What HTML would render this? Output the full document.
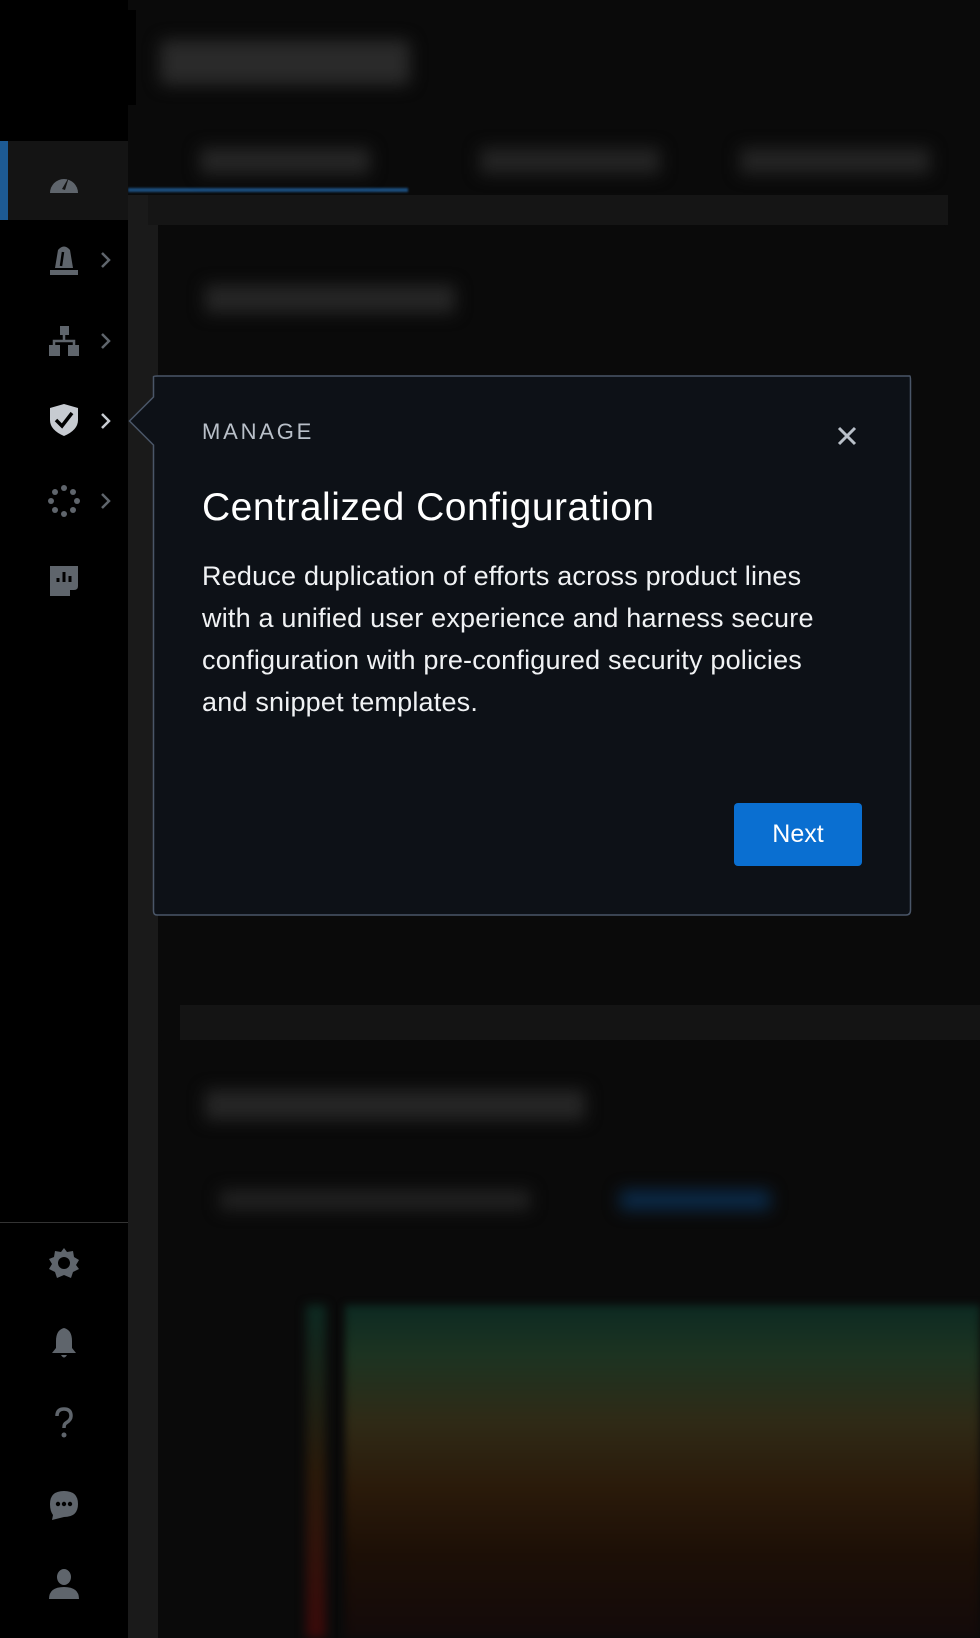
<!DOCTYPE html>
<html><head><meta charset="utf-8"><style>
*{margin:0;padding:0;box-sizing:border-box}
body{width:980px;height:1638px;background:#080808;position:relative;overflow:hidden;font-family:"Liberation Sans",sans-serif}
.abs{position:absolute}
.sb{left:0;top:0;width:128px;height:1638px;background:#000}
.blur{filter:blur(8px)}
.ic{position:absolute;left:48px;width:32px;height:32px}
.chev{position:absolute;left:99px;width:14px;height:18px}
</style></head><body>
<div class="abs" style="left:0;top:0;width:980px;height:2px;background:#7c8f7c"></div>
<div class="abs" style="left:128px;top:0;width:852px;height:1638px;background:#0a0a0a"></div>
<div class="abs" style="left:128px;top:195px;width:30px;height:1443px;background:#1a1a1a"></div>
<div class="abs" style="left:148px;top:195px;width:800px;height:30px;background:#151515" ></div>
<div class="abs" style="left:158px;top:225px;width:790px;height:780px;background:#0a0a0a;border-radius:6px"></div>
<div class="abs" style="left:180px;top:1005px;width:800px;height:35px;background:#141414"></div>
<div class="abs" style="left:158px;top:1040px;width:822px;height:598px;background:#0a0a0a;border-radius:6px"></div>
<div class="abs" style="left:128px;top:188px;width:280px;height:4px;background:#1c4f80;filter:blur(1px)"></div>
<div class="abs blur" style="left:160px;top:40px;width:250px;height:45px;background:#2a2a2a;border-radius:6px"></div>
<div class="abs blur" style="left:200px;top:148px;width:170px;height:26px;background:#262626"></div>
<div class="abs blur" style="left:480px;top:148px;width:180px;height:26px;background:#242424"></div>
<div class="abs blur" style="left:740px;top:148px;width:190px;height:26px;background:#242424"></div>
<div class="abs blur" style="left:205px;top:285px;width:250px;height:28px;background:#262626"></div>
<div class="abs blur" style="left:205px;top:1090px;width:380px;height:30px;background:#262626"></div>
<div class="abs blur" style="left:220px;top:1190px;width:310px;height:20px;background:#222"></div>
<div class="abs blur" style="left:620px;top:1190px;width:150px;height:20px;background:#0b2a48"></div>
<div class="abs" style="left:345px;top:1305px;width:635px;height:333px;background:linear-gradient(#0d2a22 0%,#1c3321 15%,#2f2a16 35%,#2a1a0a 55%,#1c0f06 75%,#130a0a 100%);filter:blur(4px)"></div>
<div class="abs" style="left:306px;top:1305px;width:20px;height:333px;background:linear-gradient(#0d2a22,#2a1a0a 50%,#3a0a0a);filter:blur(5px)"></div>
<div class="abs sb"></div>
<div class="abs" style="left:0;top:10px;width:136px;height:95px;background:#000"></div>
<div class="abs" style="left:0;top:141px;width:128px;height:79px;background:#141414"></div>
<div class="abs" style="left:0;top:141px;width:8px;height:79px;background:#1d5a93"></div>
<div class="abs" style="left:0;top:1222px;width:128px;height:1px;background:#333"></div>
<svg class="ic" style="top:165px" viewBox="0 0 32 32"><path d="M2 28A14 14 0 1 1 30 28Z" fill="#5f656c"/><path d="M17 25L21 12L14 24Z" fill="#141414"/></svg>
<svg class="ic" style="top:244px" viewBox="0 0 32 32"><path d="M7 24L10 6Q16 -1 22 6L25 24Z" fill="#5f656c"/><path d="M13 22L15 8" stroke="#000" stroke-width="2.5"/><rect x="2" y="26" width="28" height="5" fill="#5f656c"/></svg>
<svg class="ic" style="top:325px" viewBox="0 0 32 32"><rect x="12" y="1" width="9" height="9" fill="#5f656c"/><path d="M16 10V16M6 22V16H26V22" stroke="#5f656c" stroke-width="2.5" fill="none"/><rect x="1" y="20" width="11" height="11" fill="#5f656c"/><rect x="20" y="20" width="11" height="11" fill="#5f656c"/></svg>
<svg class="ic" style="top:404px" viewBox="0 0 32 32"><path d="M2 4L16 0L30 4V16Q30 26 16 32Q2 26 2 16Z" fill="#c7cbd1"/><path d="M8 16L14 22L24 9" stroke="#000" stroke-width="3.5" fill="none"/></svg>
<svg class="ic" style="top:485px" viewBox="0 0 32 32" fill="#5f656c"><circle cx="16" cy="3" r="3"/><circle cx="16" cy="29" r="3"/><circle cx="3" cy="16" r="3"/><circle cx="29" cy="16" r="3"/><circle cx="7" cy="7" r="3"/><circle cx="25" cy="7" r="3"/><circle cx="7" cy="25" r="3"/><circle cx="25" cy="25" r="3"/></svg>
<svg class="ic" style="top:564px" viewBox="0 0 32 32"><path d="M2 2H30V22Q30 26 26 26H22V32H2Z" fill="#5f656c"/><path d="M10 18V14M16 18V8M22 18V12" stroke="#000" stroke-width="3"/></svg>
<svg class="chev" style="top:251px" viewBox="0 0 14 18"><path d="M3 2L10 9L3 16" stroke="#5f656c" stroke-width="2.5" fill="none"/></svg>
<svg class="chev" style="top:332px" viewBox="0 0 14 18"><path d="M3 2L10 9L3 16" stroke="#5f656c" stroke-width="2.5" fill="none"/></svg>
<svg class="chev" style="top:412px" viewBox="0 0 14 18"><path d="M3 2L10 9L3 16" stroke="#c7cbd1" stroke-width="2.5" fill="none"/></svg>
<svg class="chev" style="top:492px" viewBox="0 0 14 18"><path d="M3 2L10 9L3 16" stroke="#5f656c" stroke-width="2.5" fill="none"/></svg>
<svg class="ic" style="top:1247px" viewBox="0 0 32 32"><path d="M16 1L19 5L25 4L26 10L31 13L28 18L31 22L25 25L23 31L16 28L9 31L7 25L1 22L4 17L1 12L6 10L7 4L13 5Z" fill="#5f656c"/><circle cx="16" cy="16" r="6" fill="#000"/></svg>
<svg class="ic" style="top:1327px" viewBox="0 0 32 32"><path d="M16 1Q24 3 24 14V21L28 26H4L8 21V14Q8 3 16 1Z" fill="#5f656c"/><path d="M13 28H19Q16 33 13 28Z" fill="#5f656c"/></svg>
<svg class="ic" style="top:1407px" viewBox="0 0 32 32"><path d="M9 9Q9 2 16 2Q23 2 23 9Q23 13 18 16Q16 17 16 21" stroke="#5f656c" stroke-width="3.5" fill="none"/><circle cx="16" cy="28" r="2.5" fill="#5f656c"/></svg>
<svg class="ic" style="top:1489px" viewBox="0 0 32 32"><path d="M16 2Q30 2 30 15Q30 28 16 28L4 31L5 26Q2 22 2 15Q2 2 16 2Z" fill="#5f656c"/><circle cx="10" cy="15" r="2.2" fill="#000"/><circle cx="16" cy="15" r="2.2" fill="#000"/><circle cx="22" cy="15" r="2.2" fill="#000"/></svg>
<svg class="ic" style="top:1568px" viewBox="0 0 32 32"><ellipse cx="16" cy="9" rx="7" ry="8" fill="#5f656c"/><path d="M1 31Q1 19 16 19Q31 19 31 31Z" fill="#5f656c"/></svg>
<svg class="abs" style="left:126px;top:370px" width="800" height="560">
<path d="M27.5 6.5Q27.5 6 32 6H784Q784.5 6 784.5 11V540Q784.5 545 780 545H31Q27.5 545 27.5 541V75L3.5 51L27.5 27Z" fill="#0d1117" stroke="#4a5668" stroke-width="1.5"/>
</svg>
<div class="abs" style="left:202px;top:419px;color:#b9c0c9;font-size:22px;letter-spacing:2.8px">MANAGE</div>
<svg class="abs" style="left:836px;top:425px" width="22" height="22"><path d="M3 3L19 19M19 3L3 19" stroke="#b9c0c9" stroke-width="3"/></svg>
<div class="abs" style="left:202px;top:486px;color:#fff;font-size:39px;white-space:nowrap;letter-spacing:0.5px">Centralized Configuration</div>
<div class="abs" style="left:202px;top:555px;color:#f0f2f4;font-size:27px;line-height:42px;white-space:nowrap;letter-spacing:0.2px">Reduce duplication of efforts across product lines<br>with a unified user experience and harness secure<br>configuration with pre-configured security policies<br>and snippet templates.</div>
<div class="abs" style="left:734px;top:803px;width:128px;height:63px;background:#0a6fd1;border-radius:4px;color:#fff;font-size:25px;line-height:63px;text-align:center">Next</div>
</body></html>
